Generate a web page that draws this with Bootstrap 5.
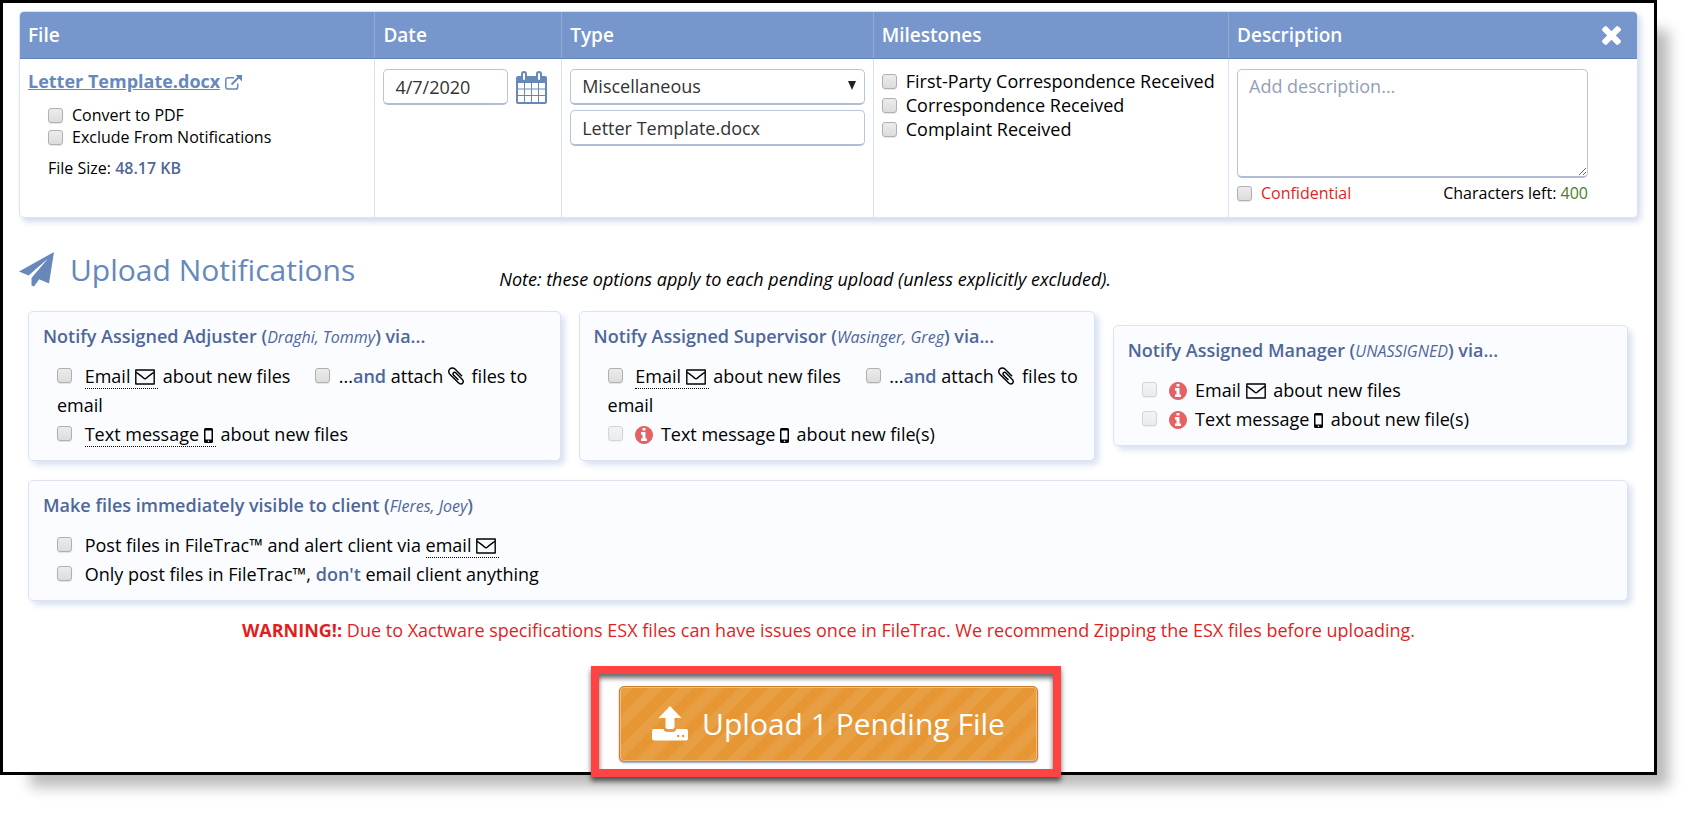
<!DOCTYPE html>
<html lang="en">
<head>
<meta charset="utf-8">
<meta name="viewport" content="width=device-width, initial-scale=1">
<title>Pending Uploads</title>
<link href="https://cdn.jsdelivr.net/npm/bootstrap@5.3.0/dist/css/bootstrap.min.css" rel="stylesheet">
<style>
  :root { --blue: #6688bb; --navy: #4f6799; --line: #dbe3f0; }
  body { font-family: "Open Sans", "Noto Sans", sans-serif; font-size: 18px; line-height: 24px; color: #000; background: #fff; }
  .frame { margin: 0 43px 43px 0; border: 3px solid #000; padding: 8px 16px 10px; box-shadow: 21px 21px 13px -9px rgba(0,0,0,.27); background: #fff; }

  .file-panel { border: 1px solid var(--line); border-radius: 5px; box-shadow: 3px 4px 6px #d3dcec; overflow: hidden; }
  .file-table { table-layout: fixed; }
  .file-table th { background: #7796cb; color: #fff; font-weight: 600; font-size: 19px; line-height: 24px; padding: 11px 8px; border-bottom: 1px solid #6384bb; }
  .file-table td { padding: 10px 8px 12px; vertical-align: top; height: 158px; }
  .file-table th + th, .file-table td + td { border-left: 1px solid var(--line); }
  .file-table th + th { border-left-color: #93abd5; }
  .file-link { color: var(--blue); font-weight: 700; }
  .file-options { padding: 11px 0 0 20px; }
  .file-size { margin-top: 9px; }
  .description { padding-right: 41px; }
  .fine { font-size: 16px; line-height: 22px; }
  .navy { color: var(--navy); font-weight: 600; }
  .red { color: #e01f1f; }
  .green { color: #4c7c2c; }
  .close-btn { border: 0; background: none; padding: 0; line-height: 0; color: #fff; }

  .field { border: 1px solid #b9c5da; border-bottom: 2px solid #b0bdd4; border-radius: 5px; color: #333; padding: 4px 11px; height: 36px; width: 100%; background: #fff; font-size: 18px; line-height: 26px; }
  .field::placeholder { color: #93a0b3; opacity: 1; }
  textarea.field { height: 109px; display: block; padding-top: 3px; }
  .date-field { width: 125px; }
  select.field { appearance: none; padding-top: 2px; }
  .type-select { margin-bottom: 5px; }
  .caret { right: 9px; top: 12px; pointer-events: none; }

  .tick { appearance: none; flex: none; width: 15px; height: 15px; margin: 0; border: 1px solid #b0b0b0; border-radius: 3px; background: linear-gradient(#ececec, #dcdcdc); box-shadow: 0 1px 1px rgba(0,0,0,.1); }
  .tick:checked { background: #6688bb; }
  .tick:disabled { opacity: .5; }
  .tick-row { display: flex; align-items: center; gap: 9px; }

  .heading-row { margin-top: 32px; }
  .title { color: var(--blue); font-size: 30px; line-height: 40px; font-weight: 400; margin: 0 0 1px 16px; }
  .note-line { margin-left: 144px; }
  .panels { padding: 0 10px 0 9px; }
  .panel-row { gap: 18px; margin-bottom: 19px; }
  .panel { border: 1px solid var(--line); border-radius: 5px; background: #fafcff; box-shadow: 4px 4px 6px #d9e2f1; padding: 11px 4px 11px 14px; }
  .panel h2 { font-size: 18px; line-height: 26px; font-weight: 600; color: var(--navy); margin: 0 0 12px; }
  .panel h2 em { font-size: 16px; font-weight: 400; }
  .options { padding-left: 14px; line-height: 29px; }
  .options .tick { margin-right: 8px; vertical-align: 0; }
  .options .tick.near { margin: 0 4px 0 20px; }
  .hint { border-bottom: 1px dotted #000; }
  .ico { display: inline-block; vertical-align: -2px; margin-right: 3px; }
  .info { color: #e46264; vertical-align: -3px; }
  .wide-1 { flex: 533 1 0; } .wide-2 { flex: 516 1 0; } .wide-3 { flex: 515 1 0; }

  .warning { margin: 17px 0 44px; }
  .upload-btn { border: 1px solid #d2812a; border-radius: 5px; color: #fff; font-size: 30px; line-height: 42px; padding: 16px 32px; gap: 14px; background: #e69632 linear-gradient(135deg, rgba(255,255,255,.08) 25%, transparent 25%, transparent 50%, rgba(255,255,255,.08) 50%, rgba(255,255,255,.08) 75%, transparent 75%) 0 0 / 30px 30px; box-shadow: inset 0 0 0 1px #f0bd80, 0 1px 2px rgba(80,100,150,.6); }
  .callout { inset: -20px -23px -15px -28px; border: 8px solid #ff4343; pointer-events: none; box-shadow: 0 4px 5px rgba(0,0,0,.6), inset 0 4px 5px rgba(0,0,0,.6); }
</style>
</head>
<body>
<svg width="0" height="0" class="position-absolute" aria-hidden="true">
  <symbol id="i-mail" viewBox="0 0 20 16"><path fill="none" stroke="currentColor" stroke-width="1.4" stroke-linejoin="round" d="M.8 1h18.400v14H.8zM.8 3C4 5.500 6.500 7 8.500 9c1 .9 2 .9 3 0C13.500 7 16 5.500 19.200 3"/></symbol>
  <symbol id="i-phone" viewBox="0 0 9 15"><path fill="currentColor" fill-rule="evenodd" d="M1.500 0h6A1.500 1.500 0 0 1 9 1.500v12A1.500 1.500 0 0 1 7.500 15h-6A1.500 1.500 0 0 1 0 13.500v-12A1.500 1.500 0 0 1 1.500 0zM1.500 2.500v9h6v-9zM3.700 13.200a.8.8 0 1 0 1.600 0 .8.8 0 0 0-1.600 0z"/></symbol>
  <symbol id="i-clip" viewBox="196 128 1400 1536"><path fill="currentColor" d="M1596 1385q0 117-79 196t-196 79q-135 0-235-100l-777-776q-113-115-113-271 0-159 110-270t269-111q158 0 273 113l605 606q10 10 10 22 0 16-30.500 46.500t-46.500 30.500q-13 0-23-10l-606-607q-79-77-181-77-106 0-179 75t-73 181q0 105 76 181l776 777q63 63 145 63 64 0 106-42t42-106q0-82-63-145l-581-581q-26-24-60-24-29 0-48 19t-19 48q0 32 25 59l410 410q10 10 10 22 0 16-31 47t-47 31q-12 0-22-10l-410-410q-63-61-63-149 0-82 57-139t139-57q88 0 149 63l581 581q100 98 100 235z"/></symbol>
  <symbol id="i-info" viewBox="128 128 1536 1536"><path fill="currentColor" d="M1152 1376v-160q0-14-9-23t-23-9h-96v-512q0-14-9-23t-23-9h-320q-14 0-23 9t-9 23v160q0 14 9 23t23 9h96v320h-96q-14 0-23 9t-9 23v160q0 14 9 23t23 9h448q14 0 23-9t9-23zm-128-896v-160q0-14-9-23t-23-9h-192q-14 0-23 9t-9 23v160q0 14 9 23t23 9h192q14 0 23-9t9-23zm640 416q0 209-103 385.500t-279.500 279.500-385.500 103-385.500-103-279.500-279.500-103-385.500 103-385.500 279.500-279.500 385.500-103 385.500 103 279.500 279.500 103 385.500z"/></symbol>
</svg>

<main class="frame">
  <div class="file-panel">
    <table class="file-table w-100">
      <colgroup><col style="width:21.95%"><col style="width:11.55%"><col style="width:19.27%"><col style="width:21.97%"><col></colgroup>
      <thead>
        <tr>
          <th scope="col">File</th><th scope="col">Date</th><th scope="col">Type</th><th scope="col">Milestones</th>
          <th scope="col"><div class="d-flex justify-content-between align-items-center pe-2"><span>Description</span>
            <button type="button" class="close-btn" aria-label="Remove file"><svg width="19" height="19" viewBox="302 366 1188 1188"><path fill="currentColor" d="M1490 1322q0 40-28 68l-136 136q-28 28-68 28t-68-28l-294-294-294 294q-28 28-68 28t-68-28l-136-136q-28-28-28-68t28-68l294-294-294-294q-28-28-28-68t28-68l136-136q28-28 68-28t68 28l294 294 294-294q28-28 68-28t68 28l136 136q28 28 28 68t-28 68l-294 294 294 294q28 28 28 68z"/></svg></button></div></th>
        </tr>
      </thead>
      <tbody>
        <tr>
          <td>
            <div><a href="#" class="file-link">Letter Template.docx</a>
              <svg class="ico" width="17" height="15" viewBox="0 0 17 15" fill="none" stroke="#6688bb" stroke-width="1.500"><path d="M9 2.700H3A2.200 2.200 0 0 0 .8 4.900v7A2.200 2.200 0 0 0 3 14.100h7.500a2.200 2.200 0 0 0 2.200-2.200V8.500"/><path stroke-width="2" d="M6.500 9.500L14 2"/><path fill="#6688bb" stroke="none" d="M10.500 0H17v6.500z"/></svg></div>
            <div class="fine file-options">
              <label class="tick-row"><input type="checkbox" class="tick"> Convert to PDF</label>
              <label class="tick-row"><input type="checkbox" class="tick"> Exclude From Notifications</label>
              <div class="file-size">File Size: <span class="navy">48.17 KB</span></div>
            </div>
          </td>
          <td>
            <div class="d-flex align-items-center gap-2">
              <input class="field date-field" type="text" value="4/7/2020" aria-label="Date">
              <button type="button" class="close-btn" aria-label="Pick a date"><svg width="31" height="33" viewBox="0 0 31 33"><path fill="#6688bb" fill-rule="evenodd" d="M2 5h3V3a3 3 0 0 1 6 0v2h9V3a3 3 0 0 1 6 0v2h3a2 2 0 0 1 2 2v24a2 2 0 0 1-2 2H2a2 2 0 0 1-2-2V7a2 2 0 0 1 2-2zM7 3v5a1 1 0 0 0 2 0V3a1 1 0 0 0-2 0zm15 0v5a1 1 0 0 0 2 0V3a1 1 0 0 0-2 0zM2 12v5.500H8v-5.500zm7 0v5.500H15v-5.500zm7 0v5.500H22v-5.500zm7 0v5.500h6v-5.500zM2 18.500v5.500H8v-5.500zm7 0v5.500H15v-5.500zm7 0v5.500H22v-5.500zm7 0v5.500h6v-5.500zM2 25v6H8V25zm7 0v6H15V25zm7 0v6H22V25zm7 0v6h6V25z"/></svg></button>
            </div>
          </td>
          <td>
            <div class="position-relative type-select">
              <select class="field" aria-label="Type"><option>Miscellaneous</option></select>
              <svg class="caret position-absolute" width="8" height="9" viewBox="0 0 8 9"><path fill="#222" d="M0 0h8L4 9z"/></svg>
            </div>
            <input class="field" type="text" value="Letter Template.docx" aria-label="File name">
          </td>
          <td>
            <label class="tick-row"><input type="checkbox" class="tick"> First-Party Correspondence Received</label>
            <label class="tick-row"><input type="checkbox" class="tick"> Correspondence Received</label>
            <label class="tick-row"><input type="checkbox" class="tick"> Complaint Received</label>
          </td>
          <td>
            <div class="description">
              <textarea class="field" placeholder="Add description..." aria-label="Description"></textarea>
              <div class="fine d-flex justify-content-between mt-1">
                <label class="tick-row red"><input type="checkbox" class="tick"> Confidential</label>
                <span>Characters left: <span class="green">400</span></span>
              </div>
            </div>
          </td>
        </tr>
      </tbody>
    </table>
  </div>

  <div class="d-flex align-items-end heading-row">
    <svg width="35" height="35" viewBox="0 0 35 35" class="mb-1"><path fill="#6688bb" d="M35 0l-5 31.500-9.800-4.200-5.200 7.200-2.500-1V26L29 6.500 9.500 23.500 0 19.500z"/></svg>
    <h1 class="title">Upload Notifications</h1>
    <em class="note-line">Note: these options apply to each pending upload (unless explicitly excluded).</em>
  </div>

  <div class="panels pt-3 mt-1">
    <div class="d-flex align-items-center panel-row">
      <section class="panel wide-1">
        <h2>Notify Assigned Adjuster (<em>Draghi, Tommy</em>) via...</h2>
        <div class="options">
          <input type="checkbox" class="tick" id="adj-mail"> <label class="d-inline" for="adj-mail"><span class="hint">Email <svg class="ico" width="20" height="16"><use href="#i-mail"/></svg></span> about new files</label>
          <input type="checkbox" class="tick near" id="adj-attach"> <label class="d-inline" for="adj-attach">...<span class="navy">and</span> attach <svg class="ico" width="16" height="18"><use href="#i-clip"/></svg> files to email</label><br>
          <input type="checkbox" class="tick" id="adj-text"> <label class="d-inline" for="adj-text"><span class="hint">Text message <svg class="ico" width="9" height="15"><use href="#i-phone"/></svg></span> about new files</label>
        </div>
      </section>
      <section class="panel wide-2">
        <h2>Notify Assigned Supervisor (<em>Wasinger, Greg</em>) via...</h2>
        <div class="options">
          <input type="checkbox" class="tick" id="sup-mail"> <label class="d-inline" for="sup-mail"><span class="hint">Email <svg class="ico" width="20" height="16"><use href="#i-mail"/></svg></span> about new files</label>
          <input type="checkbox" class="tick near" id="sup-attach"> <label class="d-inline" for="sup-attach">...<span class="navy">and</span> attach <svg class="ico" width="16" height="18"><use href="#i-clip"/></svg> files to email</label><br>
          <input type="checkbox" class="tick" id="sup-text" disabled> <label class="d-inline" for="sup-text"><svg class="ico info" width="18" height="18"><use href="#i-info"/></svg> Text message <svg class="ico" width="9" height="15"><use href="#i-phone"/></svg> about new file(s)</label>
        </div>
      </section>
      <section class="panel wide-3">
        <h2>Notify Assigned Manager (<em>UNASSIGNED</em>) via...</h2>
        <div class="options">
          <input type="checkbox" class="tick" id="mgr-mail" disabled> <label class="d-inline" for="mgr-mail"><svg class="ico info" width="18" height="18"><use href="#i-info"/></svg> Email <svg class="ico" width="20" height="16"><use href="#i-mail"/></svg> about new files</label><br>
          <input type="checkbox" class="tick" id="mgr-text" disabled> <label class="d-inline" for="mgr-text"><svg class="ico info" width="18" height="18"><use href="#i-info"/></svg> Text message <svg class="ico" width="9" height="15"><use href="#i-phone"/></svg> about new file(s)</label>
        </div>
      </section>
    </div>
    <section class="panel">
      <h2>Make files immediately visible to client (<em>Fleres, Joey</em>)</h2>
      <div class="options">
        <input type="checkbox" class="tick" id="client-alert"> <label class="d-inline" for="client-alert">Post files in FileTrac™ and alert client via <span class="hint">email <svg class="ico" width="20" height="16"><use href="#i-mail"/></svg></span></label><br>
        <input type="checkbox" class="tick" id="client-post"> <label class="d-inline" for="client-post">Only post files in FileTrac™, <span class="navy">don't</span> email client anything</label>
      </div>
    </section>
  </div>

  <p class="red text-center warning"><strong>WARNING!:</strong> Due to Xactware specifications ESX files can have issues once in FileTrac. We recommend Zipping the ESX files before uploading.</p>

  <div class="d-flex justify-content-center">
    <div class="position-relative">
      <button type="button" class="upload-btn d-flex align-items-center">
        <svg width="36" height="35" viewBox="0 0 36 35"><path fill="#fff" fill-rule="evenodd" d="M18 0l11.500 12H22.500v9a2 2 0 0 1-2 2h-5a2 2 0 0 1-2-2v-9H6.500zM2 23h9.500a4 4 0 0 0 4 3h5a4 4 0 0 0 4-3H34a2 2 0 0 1 2 2v7.500a2 2 0 0 1-2 2H2a2 2 0 0 1-2-2V25a2 2 0 0 1 2-2zM25 30a1.200 1.200 0 1 0 2.400 0 1.200 1.200 0 0 0-2.400 0zm5 0a1.200 1.200 0 1 0 2.400 0 1.200 1.200 0 0 0-2.400 0z"/></svg>
        <span>Upload 1 Pending File</span>
      </button>
      <div class="callout position-absolute"></div>
    </div>
  </div>
</main>
<script src="https://cdn.jsdelivr.net/npm/bootstrap@5.3.0/dist/js/bootstrap.bundle.min.js"></script>
</body>
</html>
